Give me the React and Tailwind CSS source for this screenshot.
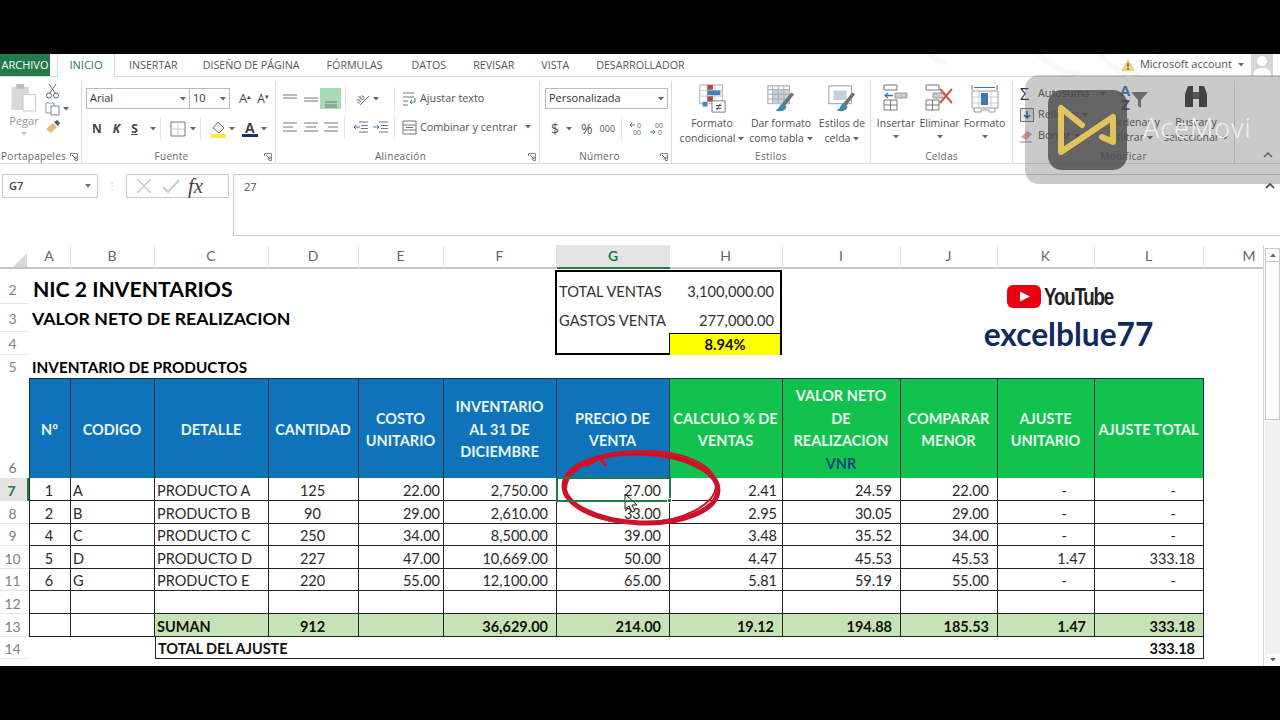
import React from "react";

const COLS = "grid grid-cols-[29px_42px_84px_114px_90px_85px_113px_113px_113px_118px_97px_97px_109px_92px]";
const RIB = "font-['Open_Sans',sans-serif] text-[#505050]";

const tabs = [
  ["INSERTAR", "ml-[14px]"],
  ["DISEÑO DE PÁGINA", "ml-[25px]"],
  ["FÓRMULAS", "ml-[27px]"],
  ["DATOS", "ml-[29px]"],
  ["REVISAR", "ml-[27px]"],
  ["VISTA", "ml-[27px]"],
  ["DESARROLLADOR", "ml-[27px]"],
];

const colHeads = ["A", "B", "C", "D", "E", "F", "G", "H", "I", "J", "K", "L", "M"];

const rows = [
  { n: 7, h: "h-[23px] leading-[25px]", c: ["1", "A", "PRODUCTO A", "125", "22.00", "2,750.00", "27.00", "2.41", "24.59", "22.00", "-", "-"] },
  { n: 8, h: "h-[23px] leading-[25px]", c: ["2", "B", "PRODUCTO B", "90", "29.00", "2,610.00", "33.00", "2.95", "30.05", "29.00", "-", "-"] },
  { n: 9, h: "h-[22px] leading-[23px]", c: ["4", "C", "PRODUCTO C", "250", "34.00", "8,500.00", "39.00", "3.48", "35.52", "34.00", "-", "-"] },
  { n: 10, h: "h-[23px] leading-[25px]", c: ["5", "D", "PRODUCTO D", "227", "47.00", "10,669.00", "50.00", "4.47", "45.53", "45.53", "1.47", "333.18"] },
  { n: 11, h: "h-[22px] leading-[23px]", c: ["6", "G", "PRODUCTO E", "220", "55.00", "12,100.00", "65.00", "5.81", "59.19", "55.00", "-", "-"] },
  { n: 12, h: "h-[23px] leading-[25px]", c: ["", "", "", "", "", "", "", "", "", "", "", ""] },
];

const heads = [
  ["Nº"],
  ["CODIGO"],
  ["DETALLE"],
  ["CANTIDAD"],
  ["COSTO", "UNITARIO"],
  ["INVENTARIO", "AL 31 DE", "DICIEMBRE"],
  ["PRECIO DE", "VENTA"],
  ["CALCULO % DE", "VENTAS"],
  ["VALOR NETO", "DE", "REALIZACION", "VNR"],
  ["COMPARAR", "MENOR"],
  ["AJUSTE", "UNITARIO"],
  ["AJUSTE TOTAL"],
];

const totals = ["SUMAN", "912", "", "36,629.00", "214.00", "19.12", "194.88", "185.53", "1.47", "333.18"];

// little triangle used by every dropdown in the ribbon
const Caret = ({ className = "" }) => (
  <svg width="6" height="4" viewBox="0 0 6 4" className={className}>
    <path d="M0 0h6L3 3.5z" fill="#666" />
  </svg>
);

const Launcher = () => (
  <svg width="8" height="8" viewBox="0 0 8 8" className="absolute right-[3px] bottom-[3px]">
    <path d="M.5 3V.5H7.5V7.5H5" fill="none" stroke="#888" />
    <path d="M2 2l4 4M6 3.5V6H3.5" fill="none" stroke="#668" />
  </svg>
);

const Sep = () => <div className="w-px h-[23px] bg-[#e2e2e2] mx-[4px]" />;

const Lines = ({ y = [3, 7, 11], x = [[1, 15], [1, 15], [1, 15]], stroke = "#777" }) => (
  <svg width="16" height="14" viewBox="0 0 16 14">
    {y.map((v, i) => (
      <path key={i} d={`M${x[i][0]} ${v}H${x[i][1]}`} stroke={stroke} />
    ))}
  </svg>
);

const Group = ({ w, label, labelClass = "text-center", launcher, children }) => (
  <div className={`relative flex flex-col shrink-0 h-[83px] mt-[4px] border-r border-[#dcdcdc] ${w}`}>
    <div className="flex-1 min-h-0">{children}</div>
    <div className={`h-[15px] text-[10px] leading-[14px] tracking-[.3px] text-[#666] whitespace-nowrap ${labelClass}`}>{label}</div>
    {launcher && <Launcher />}
  </div>
);

const BigBtn = ({ w, icon, lines, caret }) => (
  <div className={`flex flex-col items-center shrink-0 ${w}`}>
    <div className="h-[32px] flex items-start justify-center">{icon}</div>
    <div className="text-[10.5px] leading-[15px] whitespace-nowrap text-center">
      {lines.map((l, i) => (
        <div key={i}>
          {l}
          {caret && i === lines.length - 1 && <Caret className="inline ml-[3px] align-middle" />}
        </div>
      ))}
    </div>
  </div>
);

const CondIcon = () => (
  <svg width="30" height="30" viewBox="0 0 30 32">
    <path d="M2 1h24v20H2z" fill="#fff" stroke="#aaa" />
    <path d="M2 7h24M2 13h24M10 1v24M18 1v20" stroke="#ccc" />
    <path d="M10 1h6v5h-6zM10 13h6v6h-6z" fill="#b4483c" />
    <path d="M10 7h14v5H10zM5 19h5v5H5z" fill="#4a80b8" />
    <path d="M15 18h14v12H15z" fill="#fff" stroke="#777" />
    <path d="M19 23h6M19 26h6M24 21l-4 7" stroke="#444" />
  </svg>
);

const TableIcon = () => (
  <svg width="30" height="30" viewBox="0 0 30 32">
    <path d="M1 2h23v19H1z" fill="#fff" stroke="#999" />
    <path d="M6 6h18v15H6z" fill="#c3d2de" />
    <path d="M1 6h23M1 11h23M1 16h23M6 2v19M12 2v19M18 2v19" stroke="#aaa" />
    <path d="M29 11l-3-2-10 12 3 3z" fill="#707070" />
    <path d="M16 21c-3 1-2 5-7 7 5 2 11 1 12-4z" fill="#3f88b8" />
  </svg>
);

const CellStyleIcon = () => (
  <svg width="30" height="30" viewBox="0 0 30 32">
    <path d="M1 2h24v19H1z" fill="#fff" stroke="#999" />
    <path d="M6 7h14v10H6z" fill="#c3d2de" />
    <path d="M29 11l-3-2-10 12 3 3z" fill="#707070" />
    <path d="M16 21c-3 1-2 5-7 7 5 2 11 1 12-4z" fill="#3f88b8" />
  </svg>
);

const InsertIcon = () => (
  <svg width="26" height="28" viewBox="0 0 26 28">
    <path d="M1 1h13v5H1zM1 16h13v10H1zM7.500 16v10M1 21h13" fill="#fff" stroke="#777" />
    <path d="M12 9h12v5H12z" fill="#c2cfd9" stroke="#999" />
    <path d="M10 11.500H2M5 9l-3 2.500L5 14" fill="none" stroke="#3c78ad" strokeWidth="1.300" />
  </svg>
);

const DeleteIcon = () => (
  <svg width="30" height="28" viewBox="0 0 30 28">
    <path d="M1 1h13v5H1zM1 16h13v10H1zM7.500 16v10M1 21h13" fill="#fff" stroke="#777" />
    <path d="M8 9h12v5H8z" fill="#c2cfd9" stroke="#999" />
    <path d="M15 5l12 14M27 5L15 19" stroke="#d0563f" strokeWidth="2" />
  </svg>
);

const FormatIcon = () => (
  <svg width="28" height="30" viewBox="0 0 28 30">
    <path d="M1 1v5M26 1v5M3 3.500h21" stroke="#3c78ad" />
    <path d="M1 7h26v17H1z" fill="#fff" stroke="#999" />
    <path d="M1 13h26M1 19h26M8 7v17M20 7v17" stroke="#ccc" />
    <path d="M10 9h7v12h-7z" fill="#3f78ad" />
    <path d="M3 24v4h7v-2h8v2h6v-4" fill="none" stroke="#999" />
  </svg>
);

const rowHead = "text-center text-[14px] text-[#808080] pr-[4px]";

export default function App() {
  return (
    <div className="relative w-[1280px] h-[720px] bg-black overflow-hidden font-['Lato',sans-serif]">
      <div className="absolute top-[54px] left-0 w-[1280px] h-[612px] bg-white overflow-hidden flex flex-col">
        {/* tabs */}
        <div className={`relative flex items-end h-[23px] shrink-0 border-b border-[#dadada] text-[10.7px] ${RIB}`}>
          {/* faint office swirl behind the account name */}
          <svg width="360" height="23" viewBox="0 0 360 23" className="absolute right-0 top-0">
            <path d="M10 0c4 6 10 8 16 8M120 0c10 14 30 20 40 20M180 0c8 12 20 18 34 22M240 0c-6 10-16 16-26 20" fill="none" stroke="#f8f8f8" strokeWidth="6" />
          </svg>
          <div className="w-[50px] h-[23px] bg-[#217a47] text-white text-[11px] leading-[24px] text-center">ARCHIVO</div>
          <div className="ml-[7px] w-[58px] h-[24px] -mb-px bg-white border-x border-[#dadada] text-[#217a47] text-[11px] leading-[24px] text-center">INICIO</div>
          {tabs.map(([t, m]) => (
            <div key={t} className={`${m} h-[23px] leading-[24px] text-[#555]`}>{t}</div>
          ))}
          <div className="relative ml-auto flex items-center h-[23px]">
            <svg width="16" height="14" viewBox="0 0 16 14" className="mr-[4px]">
              <path d="M8 1l7 12H1z" fill="#f0cf8a" />
              <path d="M8 5v4M8 10v2" stroke="#8a5a10" strokeWidth="1.500" />
            </svg>
            <span className="text-[11px] text-[#555]">Microsoft account</span>
            <Caret className="ml-[6px] mr-[7px]" />
            <svg width="22" height="23" viewBox="0 0 22 23" className="mr-[7px]">
              <path d="M0 0h22v23H0z" fill="#d6d6d6" />
              <circle cx="11" cy="8" r="5" fill="#fff" />
              <path d="M2 23c0-6 4-8 9-8s9 2 9 8z" fill="#fff" />
            </svg>
          </div>
        </div>

        {/* ribbon */}
        <div className={`flex h-[87px] shrink-0 border-b border-[#dcdcdc] ${RIB}`}>
          <Group w="w-[82px]" label="Portapapeles" labelClass="text-left pl-px" launcher>
            <div className="flex pl-[10px] pt-[2px]">
              <div className="flex flex-col items-center w-[28px]">
                <svg width="28" height="29" viewBox="0 0 28 30">
                  <path d="M1 4h18v24H1z" fill="#d8d8d8" />
                  <path d="M6 1h8v5H6z" fill="#bdbdbd" />
                  <path d="M13 12h13v17H13z" fill="#fff" stroke="#c6c6c6" />
                </svg>
                <div className="mt-[1px] text-[11px] leading-[15px] text-[#999]">Pegar</div>
                <Caret className="mt-[4px] opacity-40" />
              </div>
              <div className="flex flex-col ml-[7px] gap-[3px]">
                <svg width="16" height="16" viewBox="0 0 16 16">
                  <path d="M4 1l6 9M11 1L5 10" stroke="#777" />
                  <circle cx="4" cy="12.500" r="2.500" fill="none" stroke="#4a6a8a" />
                  <circle cx="11" cy="12.500" r="2.500" fill="none" stroke="#4a6a8a" />
                </svg>
                <div className="flex items-center">
                  <svg width="16" height="14" viewBox="0 0 16 14">
                    <path d="M1 1h8v10H1z" fill="#fff" stroke="#999" />
                    <path d="M6 4h8v9H6z" fill="#fff" stroke="#6a8aa8" />
                  </svg>
                  <Caret className="ml-[2px]" />
                </div>
                <svg width="16" height="15" viewBox="0 0 16 15">
                  <path d="M1 10l7-6 4 4-6 6z" fill="#e0bd78" />
                  <path d="M9 3l3-2 3 3-2 3z" fill="#555" />
                </svg>
              </div>
            </div>
          </Group>

          <Group w="w-[194px]" label="Fuente" labelClass="text-center pr-[14px]" launcher>
            <div className="flex items-center pl-[4px] pt-[7px]">
              <div className="flex items-center justify-between w-[104px] h-[21px] border border-[#bbb] px-[3px] text-[11px] text-[#333]">
                Arial <Caret />
              </div>
              <div className="flex items-center justify-between w-[40px] h-[21px] border border-l-0 border-[#bbb] px-[3px] text-[11px] text-[#333]">
                10 <Caret />
              </div>
              <span className="ml-[9px] text-[13px] text-[#444]">A<sup className="text-[7px]">▴</sup></span>
              <span className="ml-[6px] text-[12px] text-[#444]">A<sup className="text-[7px]">▾</sup></span>
            </div>
            <div className="flex items-center pl-[10px] mt-[8px] h-[23px] text-[12px] text-[#444] font-bold">
              <span>N</span>
              <span className="ml-[11px] italic">K</span>
              <span className="ml-[11px] underline">S</span>
              <Caret className="ml-[12px]" />
              <Sep />
              <svg width="17" height="16" viewBox="0 0 17 16" className="ml-[5px]">
                <path d="M1 1h14v14H1z" fill="none" stroke="#777" />
                <path d="M8 1v14M1 8h14" stroke="#ccc" />
              </svg>
              <Caret className="ml-[3px]" />
              <Sep />
              <svg width="17" height="18" viewBox="0 0 17 18" className="ml-[5px]">
                <path d="M3 8l5-6 6 6-5 5z" fill="#f3f3f3" stroke="#777" />
                <path d="M1 14h15v4H1z" fill="#ffea3c" />
              </svg>
              <Caret className="ml-[2px]" />
              <div className="ml-[7px] flex flex-col items-center w-[16px]">
                <span className="text-[14px] leading-[13px] text-[#444]">A</span>
                <span className="w-[16px] h-[3px] bg-[#1d2f6a]" />
              </div>
              <Caret className="ml-[3px]" />
            </div>
          </Group>

          <Group w="w-[264px]" label="Alineación" labelClass="text-center pr-[14px]" launcher>
            <div className="flex items-center pl-[6px] pt-[7px] h-[28px]">
              <Lines y={[3, 6, 13]} x={[[1, 15], [1, 15], [16, 16]]} />
              <div className="ml-[5px]"><Lines y={[6, 9, 13]} x={[[1, 15], [1, 15], [16, 16]]} /></div>
              <div className="ml-[1px] w-[21px] h-[21px] bg-[#a6dbb3] flex items-end justify-center pb-[1px]">
                <Lines y={[8, 11, 13]} x={[[2, 14], [2, 14], [2, 14]]} />
              </div>
              <div className="w-px h-[23px] bg-[#e2e2e2] ml-[4px] mr-[8px]" />
              <svg width="16" height="15" viewBox="0 0 16 15" className="overflow-visible">
                <text x="2" y="11" fontSize="8" fill="#666" transform="rotate(-45 6 9)">ab</text>
                <path d="M6 14L15 5" stroke="#777" />
              </svg>
              <Caret className="ml-[3px]" />
              <div className="w-px h-[23px] bg-[#e2e2e2] ml-[15px] mr-[7px]" />
              <svg width="15" height="14" viewBox="0 0 15 14">
                <path d="M1 1h11M1 5h11M1 9h5M1 13h5" stroke="#777" />
                <path d="M8 10h5V6M8 10l2-2M8 10l2 2" fill="none" stroke="#3c78ad" />
              </svg>
              <span className="ml-[3px] text-[10.8px]">Ajustar texto</span>
            </div>
            <div className="flex items-center pl-[6px] mt-[6px] h-[24px]">
              <Lines y={[3, 7, 11]} x={[[1, 15], [1, 11], [1, 15]]} />
              <div className="ml-[5px]"><Lines y={[3, 7, 11]} x={[[1, 15], [3, 13], [1, 15]]} /></div>
              <div className="ml-[4px]"><Lines y={[3, 7, 11]} x={[[1, 15], [5, 15], [1, 15]]} /></div>
              <div className="w-px h-[23px] bg-[#e2e2e2] ml-[5px] mr-[8px]" />
              <svg width="15" height="12" viewBox="0 0 15 12">
                <path d="M6 1h9M8 4.500h7M8 7.500h7M6 11h9" stroke="#777" />
                <path d="M1 6h6M3 4L1 6l2 2" fill="none" stroke="#3c78ad" />
              </svg>
              <svg width="15" height="12" viewBox="0 0 15 12" className="ml-[5px]">
                <path d="M6 1h9M8 4.500h7M8 7.500h7M6 11h9" stroke="#777" />
                <path d="M0 6h6M4 4l2 2-2 2" fill="none" stroke="#3c78ad" />
              </svg>
              <div className="w-px h-[23px] bg-[#e2e2e2] ml-[6px] mr-[7px]" />
              <svg width="15" height="15" viewBox="0 0 15 15">
                <path d="M1 1h13v13H1zM1 5h13M1 10h13" fill="#fff" stroke="#777" />
                <path d="M4 7.500h7" stroke="#3c78ad" />
              </svg>
              <span className="ml-[3px] text-[10.8px] whitespace-nowrap">Combinar y centrar</span>
              <Caret className="ml-[8px]" />
            </div>
          </Group>

          <Group w="w-[132px]" label="Número" labelClass="text-center pr-[12px]" launcher>
            <div className="pl-[5px] pt-[7px]">
              <div className="flex items-center justify-between w-[123px] h-[21px] border border-[#bbb] px-[3px] text-[11px] text-[#333]">
                Personalizada <Caret />
              </div>
            </div>
            <div className="flex items-center pl-[11px] mt-[8px] h-[23px] text-[#555]">
              <span className="text-[14px]">$</span>
              <Caret className="ml-[7px]" />
              <span className="ml-[9px] text-[14px]">%</span>
              <span className="ml-[7px] text-[9px]">000</span>
              <div className="w-px h-[23px] bg-[#e2e2e2] ml-[6px] mr-[7px]" />
              <svg width="16" height="15" viewBox="0 0 16 15">
                <path d="M1 4h5M3 2L1 4l2 2" fill="none" stroke="#3c78ad" />
                <text x="8" y="7" fontSize="7" fill="#666">0</text>
                <text x="4" y="14" fontSize="7" fill="#666">00</text>
              </svg>
              <svg width="16" height="15" viewBox="0 0 16 15" className="ml-[4px]">
                <text x="6" y="7" fontSize="7" fill="#666">00</text>
                <path d="M1 11h5M4 9l2 2-2 2" fill="none" stroke="#3c78ad" />
                <text x="9" y="14" fontSize="7" fill="#666">0</text>
              </svg>
            </div>
          </Group>

          <Group w="w-[199px]" label="Estilos">
            <div className="flex pl-[3px] pt-[3px]">
              <BigBtn w="w-[74px]" icon={<CondIcon />} lines={["Formato", "condicional"]} caret />
              <BigBtn w="w-[64px]" icon={<TableIcon />} lines={["Dar formato", "como tabla"]} caret />
              <BigBtn w="w-[58px]" icon={<CellStyleIcon />} lines={["Estilos de", "celda"]} caret />
            </div>
          </Group>

          <Group w="w-[142px]" label="Celdas">
            <div className="flex pl-[3px] pt-[3px]">
              <BigBtn w="w-[44px]" icon={<InsertIcon />} lines={["Insertar"]} />
              <BigBtn w="w-[43px]" icon={<DeleteIcon />} lines={["Eliminar"]} />
              <BigBtn w="w-[47px]" icon={<FormatIcon />} lines={["Formato"]} />
            </div>
            <div className="flex pl-[3px] mt-[4px]">
              <div className="w-[44px] flex justify-center"><Caret /></div>
              <div className="w-[43px] flex justify-center"><Caret /></div>
              <div className="w-[47px] flex justify-center"><Caret /></div>
            </div>
          </Group>

          <Group w="w-[222px]" label="Modificar">
            <div className="flex pl-[7px] pt-[2px]">
              <div className="flex flex-col w-[88px] text-[10.8px]">
                <div className="flex items-center h-[21px]">
                  <span className="w-[16px] text-[16px] leading-[16px] text-[#333]">Σ</span>
                  <span className="ml-[2px]">Autosuma</span>
                  <Caret className="ml-[10px]" />
                </div>
                <div className="flex items-center h-[21px]">
                  <svg width="14" height="14" viewBox="0 0 14 14">
                    <path d="M.5.5h13v13H.5z" fill="#dfe8f0" stroke="#777" />
                    <path d="M7 3v7M4 7l3 3 3-3" fill="none" stroke="#2a5f95" strokeWidth="1.500" />
                  </svg>
                  <span className="ml-[4px]">Rellenar</span>
                  <Caret className="ml-[3px]" />
                </div>
                <div className="flex items-center h-[21px]">
                  <svg width="14" height="14" viewBox="0 0 14 14">
                    <path d="M1 8l6-6 5 3-6 6z" fill="#e59aa0" />
                    <path d="M0 13h12" stroke="#888" />
                  </svg>
                  <span className="ml-[4px]">Borrar</span>
                  <Caret className="ml-[3px]" />
                </div>
              </div>
              <BigBtn
                w="w-[54px]"
                icon={
                  <svg width="30" height="30" viewBox="0 0 30 30">
                    <text x="0" y="13" fontSize="15" fontWeight="bold" fill="#3d7ab8">A</text>
                    <text x="1" y="27" fontSize="15" fontWeight="bold" fill="#5a3d8a">Z</text>
                    <path d="M11 9h17l-7 8v8l-3-2v-6z" fill="#777" />
                  </svg>
                }
                lines={["Ordenar y", "filtrar"]}
                caret
              />
              <BigBtn
                w="w-[68px]"
                icon={
                  <svg width="26" height="26" viewBox="0 0 26 26">
                    <path d="M2 24V11l3-8h5v21zM16 24V3h5l3 8v13z" fill="#3a3a3a" />
                    <path d="M10 9h6v7h-6z" fill="#5a5a5a" />
                  </svg>
                }
                lines={["Buscar y", "seleccionar"]}
                caret
              />
            </div>
          </Group>

          <div className="flex-1 flex items-end justify-end pb-[5px] pr-[7px]">
            <svg width="10" height="6" viewBox="0 0 10 6">
              <path d="M1 5l4-4 4 4" fill="none" stroke="#666" strokeWidth="1.500" />
            </svg>
          </div>
        </div>

        {/* formula bar */}
        <div className={`flex items-start h-[72px] pt-[10px] shrink-0 ${RIB}`}>
          <div className="flex items-center justify-between ml-[2px] w-[96px] h-[24px] border border-[#ccc] pl-[6px] pr-[6px] text-[11px] font-semibold text-[#444]">
            G7 <Caret />
          </div>
          <div className="w-[28px] h-[24px] flex items-center justify-center text-[#bbb] text-[10px]">⋮</div>
          <div className="flex items-center w-[103px] h-[24px] border border-[#ccc] pl-[9px]">
            <svg width="16" height="16" viewBox="0 0 16 16">
              <path d="M1 1l14 14M15 1L1 15" stroke="#ccc" strokeWidth="1.600" />
            </svg>
            <svg width="18" height="16" viewBox="0 0 18 16" className="ml-[10px]">
              <path d="M1 9l5 5L17 2" fill="none" stroke="#ccc" strokeWidth="2" />
            </svg>
            <span className="ml-[8px] font-['Liberation_Serif',serif] italic text-[21px] leading-[20px] text-[#444]">fx</span>
          </div>
          <div className="flex-1 ml-[4px] h-[62px] border border-[#ccc] border-r-0 pl-[10px] pt-[4px] text-[11px] text-[#555] flex justify-between">
            27
            <svg width="10" height="6" viewBox="0 0 10 6" className="mr-[5px] mt-[4px]">
              <path d="M1 5l4-4 4 4" fill="none" stroke="#555" strokeWidth="1.800" />
            </svg>
          </div>
        </div>

        {/* sheet */}
        <div className="flex flex-1 min-h-0 pt-[9px]">
          <div className="w-[1264px] shrink-0 border-r border-[#d8d8d8] overflow-hidden">
            <div className={`${COLS} h-[24px] border-b-2 border-[#c6c6c6] text-[14px] text-[#666]`}>
              <div className="flex items-end justify-end pr-[2px] pb-[2px]">
                <svg width="14" height="14" viewBox="0 0 14 14"><path d="M14 0v14H0z" fill="#d8d8d8" /></svg>
              </div>
              {colHeads.map((c) => (
                <div
                  key={c}
                  className={c === "G"
                    ? "text-center pr-px leading-[22px] bg-[#e4e4e4] border-b-2 border-[#217a47] h-[24px] font-bold text-[#217a47]"
                    : "text-center pr-px leading-[22px] border-r border-[#e0e0e0]"}
                >
                  {c}
                </div>
              ))}
            </div>

            {/* rows 2 to 5 */}
            <div className={`${COLS} grid-rows-[35px_28px_23px_23px] text-black`}>
              <div className={`${rowHead} col-start-1 row-start-1 leading-[42px] border-b border-[#e6e6e6]`}>2</div>
              <div className={`${rowHead} col-start-1 row-start-2 leading-[30px] border-b border-[#e6e6e6]`}>3</div>
              <div className={`${rowHead} col-start-1 row-start-3 leading-[23px] border-b border-[#e6e6e6]`}>4</div>
              <div className={`${rowHead} col-start-1 row-start-4 leading-[24px]`}>5</div>
              <div className="col-start-2 col-span-6 row-start-1 pl-[4px] pt-[6px] text-[21.200px] leading-[28px] font-bold whitespace-nowrap">NIC 2 INVENTARIOS</div>
              <div className="col-start-2 col-span-6 row-start-2 pl-[3px] text-[17.700px] leading-[30px] font-bold whitespace-nowrap">VALOR NETO DE REALIZACION</div>
              <div className="col-start-2 col-span-6 row-start-4 pl-[3px] text-[15.300px] leading-[25px] font-bold whitespace-nowrap">INVENTARIO DE PRODUCTOS</div>

              <div className="col-start-8 col-span-2 row-start-1 row-span-3 mt-px -ml-[2px] mr-px border-2 border-black grid grid-cols-[112px_1fr] grid-rows-[36px_25px_1fr] text-[14.700px] text-[#333]">
                <div className="pl-[2px] leading-[38px]">TOTAL VENTAS</div>
                <div className="text-right pr-[6px] leading-[38px]">3,100,000.00</div>
                <div className="pl-[2px] leading-[24px]">GASTOS VENTA</div>
                <div className="text-right pr-[6px] leading-[24px]">277,000.00</div>
                <div />
                <div className="bg-[#ffff00] border-l border-t border-black text-center font-bold leading-[21px] text-[#111]">8.94%</div>
              </div>

              <div className="col-start-11 col-span-3 row-start-1 row-span-3 flex flex-col items-center pl-[32px] pt-[15px]">
                <div className="flex items-center h-[25px] mr-[16px]">
                  <svg width="34" height="23" viewBox="0 0 34 23">
                    <rect width="34" height="23" rx="6" fill="#e60012" />
                    <path d="M13 6.500l10 5-10 5z" fill="#fff" />
                  </svg>
                  <span className="ml-[3px] font-['Liberation_Sans',sans-serif] font-bold text-[24px] leading-[25px] tracking-[-1.500px] text-[#222] scale-x-[.78] origin-left w-[70px] whitespace-nowrap">YouTube</span>
                </div>
                <div className="mt-[7px] text-[31.700px] leading-[36px] font-bold text-[#10295f] whitespace-nowrap">excelblue77</div>
              </div>
            </div>

            {/* table header */}
            <div className={`${COLS} h-[100px]`}>
              <div className={`${rowHead} relative`}>
                <span className="absolute bottom-0 left-0 right-[4px]">6</span>
              </div>
              {heads.map((h, i) => (
                <div
                  key={i}
                  className={`flex flex-col items-center justify-center pt-[3px] pr-px border-r border-[#10324a] border-t text-[14.500px] leading-[22.500px] font-bold text-[#eaf6ee] whitespace-nowrap ${i < 7 ? "bg-[#0f73ba]" : "bg-[#12c24f]"} ${i === 0 ? "border-l" : ""}`}
                >
                  {h.map((l, j) => (
                    <div key={j} className={l === "VNR" ? "text-[#0f4a78]" : ""}>{l}</div>
                  ))}
                </div>
              ))}
            </div>

            {/* data rows */}
            {rows.map((r) => (
              <div key={r.n} className={`${COLS} grid-rows-[minmax(0,1fr)] ${r.h} text-[14.500px] text-[#2a2a2a]`}>
                <div className={r.n === 7
                  ? "text-center text-[14px] pr-[4px] bg-[#e4e4e4] border-r-2 border-[#217a47] font-bold text-[#217a47]"
                  : "text-center text-[14px] pr-[4px] text-[#808080] border-b border-[#e6e6e6]"}>
                  {r.n}
                </div>
                {r.c.map((v, i) => {
                  const sel = r.n === 7 && i === 6;
                  const align =
                    i === 0 || i === 3 ? "text-center pr-[2px]"
                    : i === 1 || i === 2 ? "text-left pl-[2px]"
                    : v === "-" ? "text-right pr-[27px]"
                    : i === 7 ? "text-right pr-[5px]"
                    : i === 4 ? "text-right pr-[3px]"
                    : "text-right pr-2";
                  return (
                    <div
                      key={i}
                      className={`relative whitespace-nowrap border-b border-r border-[#222] ${i === 0 ? "border-l" : ""} ${align} ${sel ? "outline-2 outline-[#217a47] -outline-offset-1 z-10" : ""}`}
                    >
                      {v}
                      {sel && <span className="absolute -right-[3px] -bottom-[3px] w-[5px] h-[5px] bg-[#217a47] border border-white" />}
                    </div>
                  );
                })}
              </div>
            ))}

            {/* SUMAN */}
            <div className={`${COLS} grid-rows-[minmax(0,1fr)] h-[23px] leading-[25px] text-[14.500px] font-bold text-[#111]`}>
              <div className="text-center text-[14px] font-normal pr-[4px] text-[#808080] border-b border-[#e6e6e6]">13</div>
              <div className="border-b border-x border-[#222]" />
              <div className="border-b border-r border-[#222]" />
              {totals.map((v, i) => (
                <div
                  key={i}
                  className={`bg-[#c6e3b5] border-b border-r border-[#222] whitespace-nowrap ${i === 0 ? "pl-[2px]" : i === 1 ? "text-center pr-[2px]" : "text-right pr-2"}`}
                >
                  {v}
                </div>
              ))}
            </div>

            {/* total row */}
            <div className={`${COLS} grid-rows-[minmax(0,1fr)] h-[22px] leading-[24px] text-[14.500px] font-bold text-[#111]`}>
              <div className="text-center text-[14px] font-normal pr-[4px] text-[#808080] border-b border-[#e6e6e6]">14</div>
              <div />
              <div />
              <div className="col-span-9 border-b border-l border-[#222] pl-[2px]">TOTAL DEL AJUSTE</div>
              <div className="border-b border-r border-[#222] text-right pr-2">333.18</div>
            </div>
          </div>

          {/* scrollbar */}
          <div className="flex-1 flex flex-col pl-[1px] pt-[3px] bg-white">
            <div className="h-[14px] border border-[#c8c8c8] flex items-center justify-center">
              <Caret className="rotate-180" />
            </div>
            <div className="h-[158px] border-x border-b border-[#c8c8c8]" />
            <div className="flex-1 bg-[#f1f1f1]" />
            <div className="h-[12px] flex items-center justify-center bg-white">
              <Caret />
            </div>
          </div>
        </div>
      </div>

      {/* red circle drawn on the video */}
      <svg width="170" height="90" viewBox="0 0 170 90" className="absolute left-[556px] top-[444px]">
        <ellipse cx="85" cy="44" rx="77" ry="35" fill="none" stroke="#d01028" strokeWidth="5" transform="rotate(2 85 44)" />
        <ellipse cx="85" cy="43" rx="75" ry="36" fill="none" stroke="#c8182e" strokeWidth="2" transform="rotate(-2 85 43)" />
        <path d="M30 22l14-8 6 8" fill="none" stroke="#d01028" strokeWidth="3" />
      </svg>

      {/* cursor */}
      <svg width="14" height="20" viewBox="0 0 14 20" className="absolute left-[624px] top-[493px]">
        <path d="M1 1v15l4-3 3 6 3-1-3-6h5z" fill="#fff" stroke="#222" />
      </svg>

      {/* AceMovi watermark */}
      <div className="absolute left-[1025px] top-[75px] w-[255px] h-[109px] rounded-l-[14px] bg-[#5555554f] flex items-center pl-[23px]">
        <div className="w-[79px] h-[80px] rounded-[14px] bg-[#4a4a4acc]">
          <svg width="79" height="80" viewBox="0 0 79 80">
            <path d="M34 35L13 18V62L65 27V52L54 47" fill="none" stroke="#e3c45c" strokeWidth="6" strokeLinejoin="round" strokeLinecap="round" />
          </svg>
        </div>
        <div className="ml-[16px] font-['Open_Sans',sans-serif] text-[27px] font-light text-[#f2f2f2] tracking-[1px] -mt-[2px]">AceMovi</div>
      </div>
    </div>
  );
}
